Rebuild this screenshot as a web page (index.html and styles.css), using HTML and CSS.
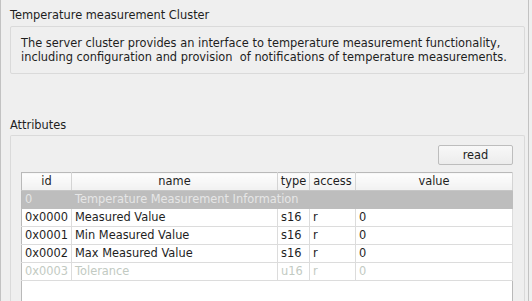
FILE: index.html
```html
<!DOCTYPE html>
<html lang="en">
<head>
    <meta charset="UTF-8">
    <title>Temperature measurement Cluster</title>
    <link rel="stylesheet" href="styles.css">
</head>
<body>
    <div class="panel">
        <div class="title">Temperature measurement Cluster</div>
        <div class="description">
            The server cluster provides an interface to temperature measurement functionality,<br>
            including configuration and provision&nbsp; of notifications of temperature measurements.
        </div>

        <div class="label">Attributes</div>
        <div class="group">
            <div class="toolbar">
                <button class="read-btn">read</button>
            </div>
            <table class="attributes">
                <colgroup>
                    <col class="c-id">
                    <col class="c-name">
                    <col class="c-type">
                    <col class="c-access">
                    <col class="c-value">
                </colgroup>
                <thead>
                    <tr><th>id</th><th>name</th><th>type</th><th>access</th><th>value</th></tr>
                </thead>
                <tbody>
                    <tr class="section"><td>0</td><td colspan="4">Temperature Measurement Information</td></tr>
                    <tr><td>0x0000</td><td>Measured Value</td><td>s16</td><td>r</td><td>0</td></tr>
                    <tr><td>0x0001</td><td>Min Measured Value</td><td>s16</td><td>r</td><td>0</td></tr>
                    <tr><td>0x0002</td><td>Max Measured Value</td><td>s16</td><td>r</td><td>0</td></tr>
                    <tr class="disabled"><td>0x0003</td><td>Tolerance</td><td>u16</td><td>r</td><td>0</td></tr>
                </tbody>
            </table>
        </div>
    </div>
</body>
</html>
```

FILE: styles.css
```css
body {
    margin: 0;
    background-color: #efefef;
    font-family: "DejaVu Sans", sans-serif;
    font-size: 11.4px;
    color: #1e1e1e;
    overflow: hidden;
}
.panel {
    width: 529px;
    height: 301px;
    padding: 8px 3px 0 9px;
    border-left: 1px solid #c2c2c2;
    border-right: 1px solid #c2c2c2;
    display: flex;
    flex-direction: column;
    box-sizing: border-box;
}
.title {
    line-height: 14px;
    white-space: nowrap;
}
.description {
    margin-top: 4px;
    padding: 9px 10px;
    line-height: 14px;
    white-space: nowrap;
    border: 1px solid #dadada;
    border-radius: 2px;
    background-color: #efefef;
}
.label {
    margin-top: 44px;
    line-height: 14px;
}
.group {
    margin-top: 3px;
    flex: 1;
    min-height: 0;
    padding: 9px 11px 0 10px;
    border: 1px solid #dadada;
    border-bottom: none;
    border-radius: 2px 2px 0 0;
    display: flex;
    flex-direction: column;
}
.toolbar {
    display: flex;
    justify-content: flex-end;
}
.read-btn {
    width: 75px;
    height: 20px;
    padding: 0;
    font-family: "DejaVu Sans", sans-serif;
    font-size: 11.4px;
    color: #1e1e1e;
    background: linear-gradient(#f8f8f8, #ececec);
    border: 1px solid #bdbdbd;
    border-radius: 2px;
}
.attributes {
    margin-top: 7px;
    flex: 1;
    border-collapse: collapse;
    table-layout: fixed;
    width: 492px;
    background-color: #ffffff;
    border: 1px solid #b9b9b9;
    border-bottom: none;
}
.attributes tbody::after {
    content: "";
    display: table-row;
    height: 100%;
}
.c-id { width: 50px; }
.c-name { width: 206px; }
.c-type { width: 32px; }
.c-access { width: 46px; }
.c-value { width: 157px; }
.attributes th {
    height: 17px;
    padding: 0;
    font-weight: normal;
    line-height: 17px;
    background: linear-gradient(#fdfdfd, #f1f1f1);
    border-right: 1px solid #d4d4d4;
    border-bottom: 1px solid #c6c6c6;
}
.attributes td {
    height: 17px;
    padding: 0 0 0 3px;
    line-height: 17px;
    white-space: nowrap;
    overflow: hidden;
    border-right: 1px solid #dcdcdc;
    border-bottom: 1px solid #dcdcdc;
}
.attributes tr.section td {
    background-color: #bdbdbd;
    color: #e6e6e6;
    border-color: #bdbdbd;
}
.attributes tr.disabled td {
    color: #c2cac2;
}
```
